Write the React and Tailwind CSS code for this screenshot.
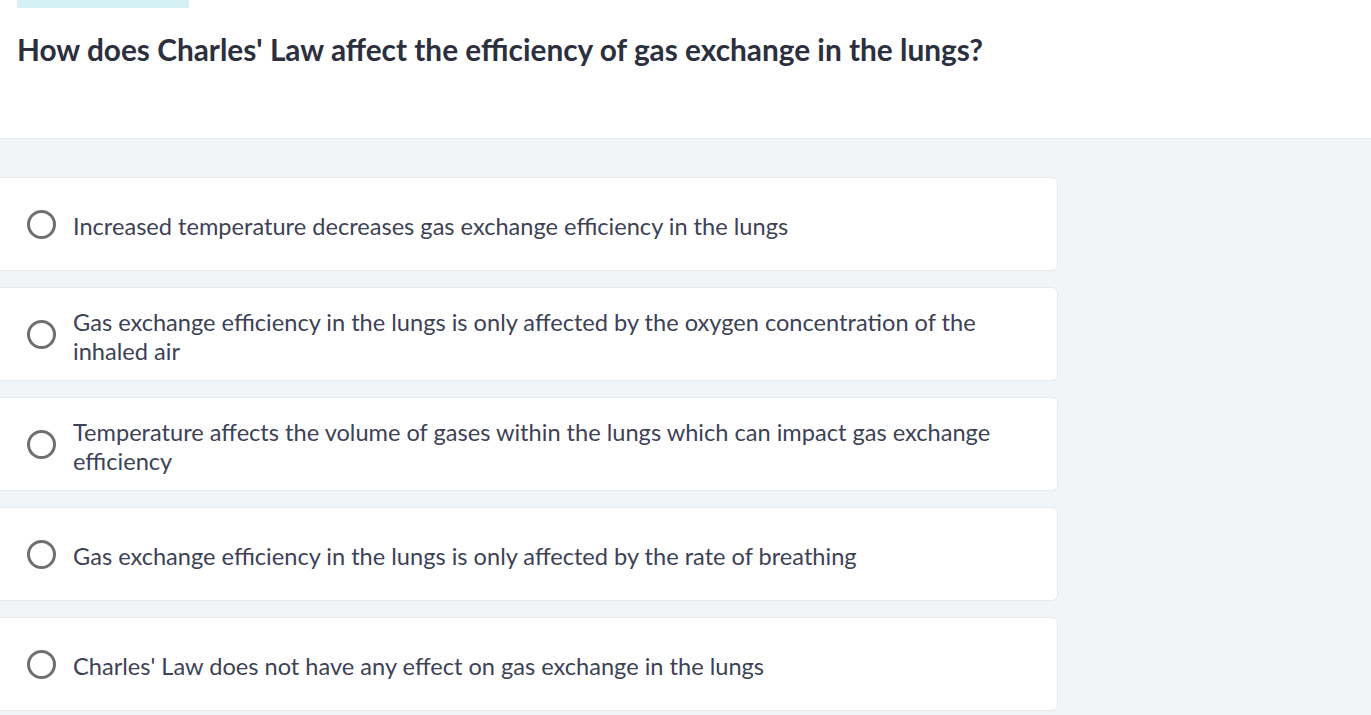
import React from 'react';

const options = [
  'Increased temperature decreases gas exchange efficiency in the lungs',
  'Gas exchange efficiency in the lungs is only affected by the oxygen concentration of the inhaled air',
  'Temperature affects the volume of gases within the lungs which can impact gas exchange efficiency',
  'Gas exchange efficiency in the lungs is only affected by the rate of breathing',
  "Charles' Law does not have any effect on gas exchange in the lungs",
];

const Option = ({ text }) => (
  <label className="flex h-[94px] w-[1058px] cursor-pointer items-center rounded-r-md border border-l-0 border-[#e6eaed] bg-white pl-[27px] pr-[40px]">
    <span className="h-[29px] w-[29px] shrink-0 rounded-full border-[3px] border-[#6f6f6f]" />
    <span className="ml-[17px] mt-[5px] text-[23.6px] leading-[29px] text-[#3d4256]">{text}</span>
  </label>
);

export default function App() {
  return (
    <div className="min-h-screen bg-[#f2f5f7] font-['Lato','Liberation_Sans',sans-serif]">
      <header className="h-[139px] border-b border-[#e6eaed] bg-white">
        <div className="ml-[17px] h-2 w-[172px] bg-[#d5f1f5]" />
        <h1 className="ml-[17px] mt-[24px] text-[29.8px] font-bold leading-9 text-[#2c2f3e]">
          How does Charles' Law affect the efficiency of gas exchange in the lungs?
        </h1>
      </header>
      <div className="flex flex-col gap-4 pt-[38px]">
        {options.map((o) => (
          <Option key={o} text={o} />
        ))}
      </div>
    </div>
  );
}
